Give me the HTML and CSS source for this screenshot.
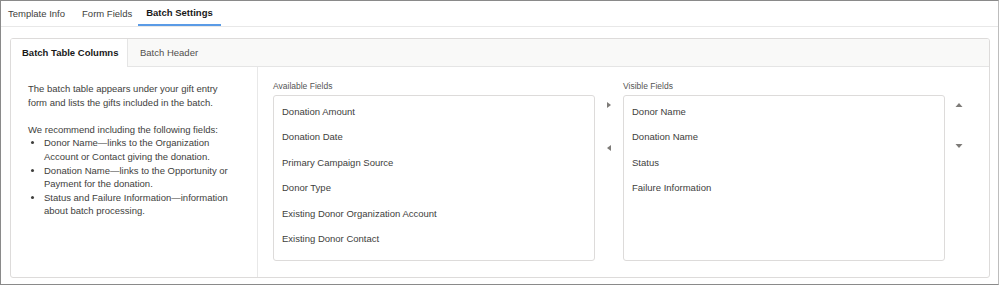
FILE: index.html
```html
<!DOCTYPE html>
<html>
<head>
<meta charset="utf-8">
<title>Batch Settings</title>
<link rel="stylesheet" href="styles.css">
</head>
<body>
<div class="frame">
	<div class="topnav">
		<span class="toptab">Template Info</span>
		<span class="toptab">Form Fields</span>
		<span class="toptab active">Batch Settings</span>
	</div>
	<div class="card">
		<div class="cardtabs">
			<span class="cardtab active">Batch Table Columns</span>
			<span class="cardtab">Batch Header</span>
		</div>
		<div class="cardbody">
			<div class="help">
				<p>The batch table appears under your gift entry form and lists the gifts included in the batch.</p>
				<p>We recommend including the following fields:</p>
				<ul>
					<li>Donor Name—links to the Organization Account or Contact giving the donation.</li>
					<li>Donation Name—links to the Opportunity or Payment for the donation.</li>
					<li>Status and Failure Information—information about batch processing.</li>
				</ul>
			</div>
			<div class="dual">
				<div class="listcol">
					<div class="label">Available Fields</div>
					<div class="listbox">
						<div class="item">Donation Amount</div>
						<div class="item">Donation Date</div>
						<div class="item">Primary Campaign Source</div>
						<div class="item">Donor Type</div>
						<div class="item">Existing Donor Organization Account</div>
						<div class="item">Existing Donor Contact</div>
					</div>
				</div>
				<div class="arrows">
					<svg width="8" height="8" viewBox="0 0 8 8"><path d="M2 1 L6 4 L2 7 Z" fill="#7d7b78"/></svg>
					<svg width="8" height="8" viewBox="0 0 8 8"><path d="M6 1 L2 4 L6 7 Z" fill="#7d7b78"/></svg>
				</div>
				<div class="listcol">
					<div class="label">Visible Fields</div>
					<div class="listbox">
						<div class="item">Donor Name</div>
						<div class="item">Donation Name</div>
						<div class="item">Status</div>
						<div class="item">Failure Information</div>
					</div>
				</div>
				<div class="arrows updown">
					<svg width="8" height="8" viewBox="0 0 8 8"><path d="M0.5 6 L4 2 L7.5 6 Z" fill="#7d7b78"/></svg>
					<svg width="8" height="8" viewBox="0 0 8 8"><path d="M0.5 2 L4 6 L7.5 2 Z" fill="#7d7b78"/></svg>
				</div>
			</div>
		</div>
	</div>
</div>
</body>
</html>
```

FILE: styles.css
```css
*
{
	margin:0;
	padding:0;
	box-sizing:border-box;
}
body
{
	font-family:"Liberation Sans", Arial, sans-serif;
	font-size:9.5px;
	color:#3e3e3c;
	background:#fff;
}
.frame
{
	width:999px;
	height:285px;
	border:1px solid #8a8a8a;
	border-right-color:#bdbdbd;
}
.topnav
{
	display:flex;
	height:26px;
	border-bottom:1px solid #e8e8e8;
	font-size:9.5px;
}
.toptab
{
	padding:0 8px 0 7px;
	line-height:26px;
	margin-right:1px;
	color:#3e3e3c;
}
.toptab + .toptab
{
	margin-left:1px;
}
.toptab.active
{
	font-weight:bold;
	color:#181818;
	padding:0 8px;
	margin-left:-3px;
	border-bottom:2px solid #5a9be6;
	line-height:24px;
}
.card
{
	margin:11px 8px 0 9px;
	height:240px;
	border:1px solid #dddbda;
	border-radius:3px;
	overflow:hidden;
}
.cardtabs
{
	display:flex;
	height:28px;
	background:#f9f9f8;
	border-bottom:1px solid #e5e5e5;
	font-size:9.5px;
}
.cardtab
{
	line-height:27px;
	padding:0 12px;
	color:#514f4d;
}
.cardtab.active
{
	background:#fff;
	width:117px;
	padding:0 0 0 11px;
	font-weight:bold;
	color:#181818;
	border-right:1px solid #e5e5e5;
	height:28px;
}
.cardbody
{
	display:flex;
	height:210px;
}
.help
{
	width:247px;
	padding:15px 28px 0 17px;
	border-right:1px solid #e8e8e8;
	line-height:13.6px;
}
.help p
{
	margin-bottom:13.6px;
}
.help p + p
{
	margin-bottom:0;
}
.help ul
{
	padding-left:16px;
}
.dual
{
	display:flex;
	padding:14px 0 0 15px;
}
.listcol
{
	width:322px;
}
.label
{
	font-size:8.5px;
	color:#555;
	height:14px;
	line-height:10px;
}
.listbox
{
	height:166px;
	border:1px solid #dddbda;
	border-radius:3px;
	padding-top:3px;
}
.item
{
	height:25.4px;
	line-height:25.4px;
	padding-left:8px;
}
.arrows
{
	width:28px;
	display:flex;
	flex-direction:column;
	align-items:center;
	gap:35px;
	padding-top:20px;
}
.updown
{
	gap:33px;
	padding-top:20px;
}
```
